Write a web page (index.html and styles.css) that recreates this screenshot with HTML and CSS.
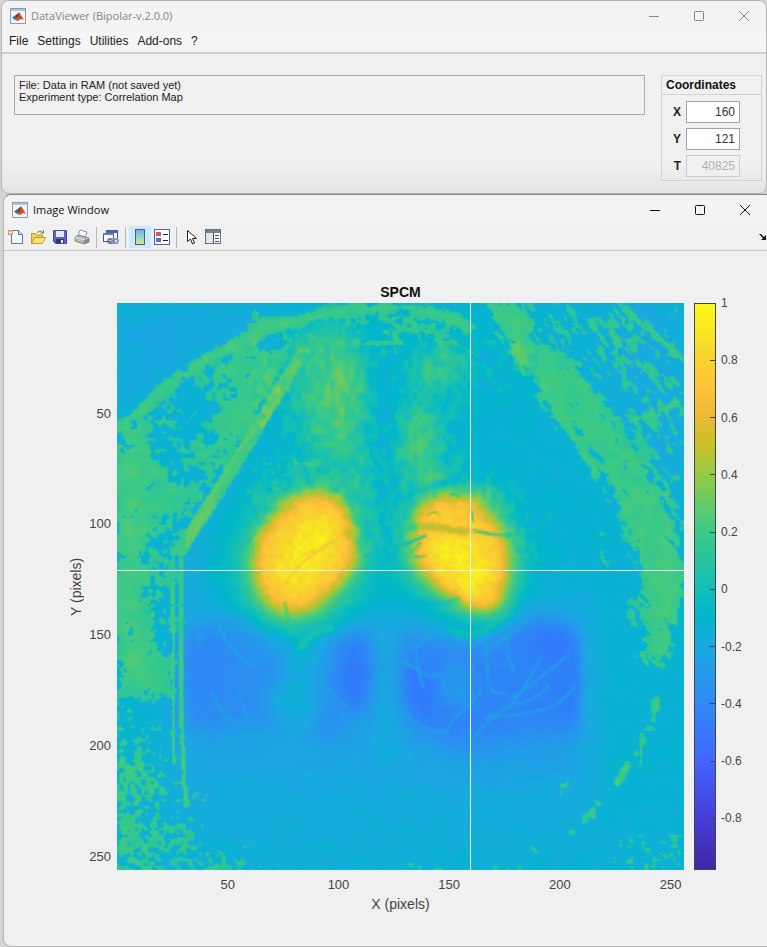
FILE: index.html
```html
<!DOCTYPE html>
<html lang="en">
  <head>
    <meta charset="UTF-8" />
    <meta name="viewport" content="width=device-width, initial-scale=1.0" />
    <title>DataViewer</title>
    <link rel="stylesheet" href="styles.css">
  </head>
  <body>
    <section class="window viewer">
      <header class="titlebar inactive">
        <svg class="app-icon" viewBox="0 0 16 16">
          <rect x=".5" y=".5" width="15" height="15" fill="#f4f7fa" stroke="#8c9bab" />
          <path d="M1 1h14v2H1z" fill="#a9c4dd" />
          <path d="M2 9.500l3-2 3-1.500 1 3-4 3z" fill="#2d6f9e" />
          <path d="M5 12l2-2 2-6 2 3 3 5-3-1-3 2z" fill="#d4501c" />
          <path d="M9 4l-2 6-1-2 1-2z" fill="#7c1f16" />
        </svg>
        <h1>DataViewer (Bipolar-v.2.0.0)</h1>
        <div class="window-buttons">
          <button aria-label="Minimize"><svg viewBox="0 0 12 12"><path d="M1 6.500h10" /></svg></button>
          <button aria-label="Maximize"><svg viewBox="0 0 12 12"><rect x="1.500" y="1.500" width="9" height="9" rx="1" /></svg></button>
          <button aria-label="Close"><svg viewBox="0 0 12 12"><path d="M1 1l10 10M11 1L1 11" /></svg></button>
        </div>
      </header>
      <nav class="menubar">
        <button>File</button>
        <button>Settings</button>
        <button>Utilities</button>
        <button>Add-ons</button>
        <button>?</button>
      </nav>
      <div class="viewer-body">
        <div class="info">
          <p>File: Data in RAM (not saved yet)</p>
          <p>Experiment type: Correlation Map</p>
        </div>
        <fieldset class="coords">
          <legend>Coordinates</legend>
          <div class="coord-row">
            <label for="coordX">X</label>
            <input type="text" id="coordX" value="160" />
          </div>
          <div class="coord-row">
            <label for="coordY">Y</label>
            <input type="text" id="coordY" value="121" />
          </div>
          <div class="coord-row">
            <label for="coordT">T</label>
            <input type="text" id="coordT" value="40825" disabled />
          </div>
        </fieldset>
      </div>
    </section>

    <section class="window image-window">
      <header class="titlebar">
        <svg class="app-icon" viewBox="0 0 16 16">
          <rect x=".5" y=".5" width="15" height="15" fill="#f4f7fa" stroke="#8c9bab" />
          <path d="M1 1h14v2H1z" fill="#a9c4dd" />
          <path d="M2 9.500l3-2 3-1.500 1 3-4 3z" fill="#2d6f9e" />
          <path d="M5 12l2-2 2-6 2 3 3 5-3-1-3 2z" fill="#d4501c" />
          <path d="M9 4l-2 6-1-2 1-2z" fill="#7c1f16" />
        </svg>
        <h2>Image Window</h2>
        <div class="window-buttons">
          <button aria-label="Minimize"><svg viewBox="0 0 12 12"><path d="M1 6.500h10" /></svg></button>
          <button aria-label="Maximize"><svg viewBox="0 0 12 12"><rect x="1.500" y="1.500" width="9" height="9" rx="1" /></svg></button>
          <button aria-label="Close"><svg viewBox="0 0 12 12"><path d="M1 1l10 10M11 1L1 11" /></svg></button>
        </div>
      </header>

      <div class="toolbar">
        <button aria-label="New figure">
          <svg viewBox="0 0 16 16">
            <path d="M3.500 1.500h7l4 4v9h-11z" fill="#f2f8ff" stroke="#5576a8" />
            <path d="M10.500 1.500v4h4" fill="#cfe0f5" stroke="#5576a8" />
            <path d="M0 1h5v5H0z" fill="#e79a78" />
            <path d="M2 2h1v1h1v1H3v1H2V4H1V3h1z" fill="#fff0c8" />
          </svg>
        </button>
        <button aria-label="Open file">
          <svg viewBox="0 0 16 16">
            <path d="M1.500 14V4.500h4l1 1.500h6v3" fill="#f3cf52" stroke="#c79b2c" />
            <path d="M1.500 14.500l3-6h11l-3 6z" fill="#ffe277" stroke="#c79b2c" />
            <path d="M7 3.500q3-3 6 0M13.500 1v3h-3" fill="none" stroke="#7d7a52" />
          </svg>
        </button>
        <button aria-label="Save figure">
          <svg viewBox="0 0 16 16">
            <path d="M1.500 1.500h13v13h-11l-2-2z" fill="#5a62c2" stroke="#4148a4" />
            <path d="M4 2h8v6H4z" fill="#dfe9f8" />
            <path d="M4 10h8v4H4z" fill="#30366f" />
            <path d="M9 11h2v3H9z" fill="#f4f6fa" />
          </svg>
        </button>
        <button aria-label="Print figure">
          <svg viewBox="0 0 16 16">
            <path d="M4 7l2-6 7 2-2 6z" fill="#f8fbff" stroke="#8893a3" />
            <path d="M1 8l4-2 10 3v4l-5 2-9-3z" fill="#b5b7b8" stroke="#85878a" />
            <path d="M1 8l9 3 5-2" fill="none" stroke="#e9e9e9" />
            <path d="M10 11v4l5-2V9z" fill="#85878b" />
            <path d="M2 11l6 2" stroke="#d5b76a" />
          </svg>
        </button>
        <span class="separator"></span>
        <button aria-label="Link plot">
          <svg viewBox="0 0 16 16">
            <rect x="3.500" y="1.500" width="11" height="8" fill="#fff" stroke="#40597f" />
            <path d="M3 1h12v3H3z" fill="#476895" />
            <rect x=".5" y="4.500" width="10" height="8" fill="#f7faff" stroke="#40597f" />
            <path d="M0 4h11v2H0z" fill="#5d7fab" />
            <rect x="5" y="10" width="6" height="4" rx="2" fill="none" stroke="#6b7f9d" stroke-width="2" />
            <rect x="9" y="10" width="6" height="4" rx="2" fill="none" stroke="#8b9ab2" stroke-width="2" />
          </svg>
        </button>
        <span class="separator"></span>
        <button class="active" aria-label="Insert colorbar" aria-pressed="true">
          <svg viewBox="0 0 16 16">
            <defs>
              <linearGradient id="barFill" x2="0" y2="1">
                <stop offset="0" stop-color="#8ba0ea" />
                <stop offset=".5" stop-color="#80dcd0" />
                <stop offset="1" stop-color="#f2dc70" />
              </linearGradient>
            </defs>
            <rect x="3.500" y=".5" width="9" height="15" fill="url(#barFill)" stroke="#4a5f86" />
          </svg>
        </button>
        <button aria-label="Insert legend">
          <svg viewBox="0 0 16 16">
            <rect x=".5" y=".5" width="15" height="15" fill="#fff" stroke="#4a6590" />
            <path d="M2 3h5v4H2z" fill="#e0525e" />
            <path d="M2 9h5v4H2z" fill="#5968d6" />
            <path d="M9 5.500h5M9 11.500h5" stroke="#222" />
          </svg>
        </button>
        <span class="separator"></span>
        <button aria-label="Edit plot">
          <svg viewBox="0 0 16 16">
            <path d="M4.500 1.500v11l3-2.500 2 5 2-1-2-4.500h4z" fill="#fff" stroke="#222" />
          </svg>
        </button>
        <button aria-label="Property inspector">
          <svg viewBox="0 0 16 16">
            <rect x=".5" y=".5" width="15" height="14" fill="#dfe7ec" stroke="#62707b" />
            <path d="M1 1h14v3H1z" fill="#71818e" />
            <path d="M8 4h7v10H8z" fill="#fafafa" />
            <path d="M8.500 4v10M10 6.500h4M10 9.500h4M10 12.500h4" stroke="#4b5055" />
          </svg>
        </button>
        <button class="dock" aria-label="Dock figure">
          <svg viewBox="0 0 8 8"><path d="M0 1h2l3 3 2-2v5H2l2-2z" fill="#111" /></svg>
        </button>
      </div>

      <div class="figure">
        <h3 class="plot-title">SPCM</h3>
        <div class="y-label">Y (pixels)</div>
        <ul class="y-ticks">
          <li>50</li>
          <li>100</li>
          <li>150</li>
          <li>200</li>
          <li>250</li>
        </ul>
        <div class="axes">
          <canvas id="map" width="256" height="256"></canvas>
          <span class="cross-v" id="crossV"></span>
          <span class="cross-h" id="crossH"></span>
        </div>
        <div class="colorbar"></div>
        <ul class="scale">
          <li>1</li>
          <li>0.8</li>
          <li>0.6</li>
          <li>0.4</li>
          <li>0.2</li>
          <li>0</li>
          <li>-0.2</li>
          <li>-0.4</li>
          <li>-0.6</li>
          <li>-0.8</li>
        </ul>
        <ul class="x-ticks">
          <li>50</li>
          <li>100</li>
          <li>150</li>
          <li>200</li>
          <li>250</li>
        </ul>
        <div class="x-label">X (pixels)</div>
      </div>
    </section>

    <script src="map.js"></script>
  </body>
</html>
```
FILE: styles.css
```css
* {
  box-sizing: border-box;
}
body {
  margin: 0;
  min-height: 100vh;
  display: flex;
  flex-direction: column;
  overflow-x: hidden;
  background-color: #d4d4d4;
  color: #222;
  font-family: "Liberation Sans", Arial, sans-serif;
  font-size: 12px;
}
h1,
h2,
h3,
p,
ul {
  margin: 0;
  padding: 0;
}
ul {
  list-style: none;
}
button {
  font: inherit;
  color: inherit;
  background: none;
  border: none;
  padding: 0;
}
.window {
  border: 1px solid #b4b4b4;
  border-radius: 8px;
  background-color: #f0f0f0;
}
.viewer {
  margin-left: 1px;
  background: linear-gradient(#f0f0f0 85%, #e4e4e4);
}
.image-window {
  flex: 1;
  margin-left: 3px;
  border-top-color: #858585;
  border-right: none;
  border-top-right-radius: 0;
  border-bottom-right-radius: 0;
}
.titlebar {
  display: flex;
  align-items: center;
  height: 29px;
  padding-left: 8px;
  border-radius: 8px 8px 0 0;
  background-color: #f3f3f3;
  color: #111;
}
.titlebar h1,
.titlebar h2 {
  flex: 1;
  margin-left: 5px;
  font-family: "Open Sans", "Segoe UI", sans-serif;
  font-size: 11px;
  font-weight: normal;
}
.titlebar.inactive {
  color: #858585;
}
.app-icon {
  width: 16px;
  height: 16px;
}
.window-buttons {
  display: flex;
}
.window-buttons button {
  display: flex;
  align-items: center;
  justify-content: center;
  width: 45px;
  height: 28px;
}
.window-buttons svg {
  width: 12px;
  height: 12px;
  fill: none;
  stroke: currentColor;
}
.menubar {
  display: flex;
  gap: 9px;
  height: 24px;
  padding-left: 7px;
  border-bottom: 2px solid #cfcfcf;
  background-color: #f5f5f5;
}
.viewer-body {
  display: flex;
  align-items: flex-start;
  gap: 16px;
  padding: 21px 4px 12px 12px;
}
.info {
  flex: 1;
  min-height: 40px;
  padding: 3px 4px;
  border: 1px solid #a9a9a9;
  font-size: 11px;
  line-height: 12px;
}
.coords {
  width: 101px;
  margin: 0;
  padding: 0 0 3px;
  border: 1px solid #d3d3d3;
}
.coords legend {
  float: left;
  width: 100%;
  height: 19px;
  margin-bottom: 6px;
  padding: 0 4px;
  border-bottom: 1px solid #d3d3d3;
  font-weight: bold;
  line-height: 19px;
  color: #111;
}
.coord-row {
  clear: both;
  display: flex;
  align-items: center;
  justify-content: flex-end;
  gap: 5px;
  margin-bottom: 5px;
  padding-right: 21px;
}
.coord-row:last-child {
  margin-bottom: 0;
}
.coord-row label {
  font-weight: bold;
}
.coord-row input {
  width: 54px;
  height: 22px;
  padding: 0 4px;
  border: 1px solid #a3a3a3;
  background-color: #fff;
  color: #333;
  font: inherit;
  text-align: right;
}
.coord-row input:disabled {
  border-color: #cdcdcd;
  background-color: #f0f0f0;
  color: #b0b0b0;
}
.toolbar {
  display: flex;
  align-items: center;
  height: 27px;
  padding-left: 1px;
  border-bottom: 1px solid #c9c9c9;
}
.toolbar button {
  display: flex;
  align-items: center;
  justify-content: center;
  width: 22px;
  height: 22px;
}
.toolbar svg {
  width: 16px;
  height: 16px;
}
.toolbar .active {
  background-color: #cce8ff;
}
.separator {
  width: 1px;
  height: 21px;
  margin: 0 3px;
  background-color: #b5b5b5;
}
.toolbar .dock {
  width: 9px;
  margin-left: auto;
}
.toolbar .dock svg {
  width: 8px;
  height: 8px;
}
.figure {
  display: grid;
  grid-template-columns: 16px 33px minmax(0, 1fr) 10px 22px 40px;
  grid-template-areas:
    ". . title . . ."
    "ylabel yticks axes . bar scale"
    ". . xticks . . ."
    ". . xlabel . . .";
  padding: 33px 11px 33px 64px;
  color: #444;
  font-size: 13px;
}
.plot-title {
  grid-area: title;
  height: 19px;
  color: #111;
  font-size: 14px;
  line-height: 16px;
  text-align: center;
}
.y-label,
.x-label {
  font-size: 14px;
  line-height: 16px;
  text-align: center;
}
.y-label {
  grid-area: ylabel;
  writing-mode: vertical-rl;
  transform: rotate(180deg);
}
.x-label {
  grid-area: xlabel;
}
.y-ticks {
  grid-area: yticks;
  display: grid;
  grid-template-rows: repeat(5, minmax(0, 50fr)) minmax(0, 6fr);
  padding-right: 6px;
  text-align: right;
}
.y-ticks li {
  align-self: end;
  line-height: 16px;
  transform: translateY(50%);
}
.x-ticks {
  grid-area: xticks;
  display: grid;
  grid-template-columns: repeat(5, minmax(0, 50fr)) minmax(0, 6fr);
  padding: 7px 0 3px;
}
.x-ticks li {
  justify-self: end;
  line-height: 16px;
  transform: translateX(50%);
}
.axes {
  grid-area: axes;
  position: relative;
  aspect-ratio: 1;
}
.axes canvas {
  display: block;
  width: 100%;
  height: 100%;
}
.cross-v,
.cross-h {
  position: absolute;
  background-color: #e6f5f2;
}
.cross-v {
  top: 0;
  bottom: 0;
  width: 1px;
}
.cross-h {
  left: 0;
  right: 0;
  height: 1px;
}
.colorbar {
  grid-area: bar;
  border: 1px solid #444;
  background: linear-gradient(
    to top,
    #3e26a8,
    #4640dd 10%,
    #4269fe 20%,
    #2d8cf3 30%,
    #19abe0 40%,
    #00b7ca 45%,
    #14bfb7 50%,
    #3dca85 60%,
    #96ca45 70%,
    #c9c128 75%,
    #e9ba36 80%,
    #fec338 85%,
    #f7d92b 92%,
    #f9fb15
  );
}
.scale {
  grid-area: scale;
  display: grid;
  grid-template-rows: repeat(9, minmax(0, 20fr)) minmax(0, 18fr);
  margin-left: -6px;
  font-size: 12px;
}
.scale li {
  display: flex;
  align-items: center;
  gap: 5px;
  height: 14px;
  transform: translateY(-50%);
}
.scale li::before {
  content: "";
  width: 6px;
  height: 1px;
  background-color: #444;
}
```
FILE: map.js
```javascript
const SIZE = 256;
const UNITS = 568; // drawing units across the map

const colors = [
  [0, 62, 38, 168], [0.1, 70, 64, 221], [0.2, 66, 105, 254],
  [0.25, 47, 126, 250], [0.3, 45, 140, 243], [0.4, 25, 171, 224],
  [0.45, 0, 183, 202], [0.5, 20, 191, 183], [0.6, 61, 202, 133],
  [0.7, 150, 202, 69], [0.75, 201, 193, 40], [0.8, 233, 186, 54],
  [0.85, 254, 195, 56], [0.92, 247, 217, 43], [1, 249, 251, 21],
];

function parula(v) {
  const p = Math.min(1, Math.max(0, (v + 1) / 2));
  let i = 1;
  while (colors[i][0] < p) i++;
  const a = colors[i - 1];
  const b = colors[i];
  const t = (p - a[0]) / (b[0] - a[0]);
  return [1, 2, 3].map((k) => a[k] + (b[k] - a[k]) * t);
}

function hash(x, y) {
  let h = Math.imul(x, 374761393) + Math.imul(y, 668265263);
  h = Math.imul(h ^ (h >>> 13), 1274126177);
  return ((h ^ (h >>> 16)) >>> 0) / 4294967296;
}

function noise(x, y) {
  const xi = Math.floor(x);
  const yi = Math.floor(y);
  const fx = x - xi;
  const fy = y - yi;
  const top = hash(xi, yi) * (1 - fx) + hash(xi + 1, yi) * fx;
  const bottom = hash(xi, yi + 1) * (1 - fx) + hash(xi + 1, yi + 1) * fx;
  return top * (1 - fy) + bottom * fy;
}

function makeLayer(start) {
  const canvas = document.createElement("canvas");
  canvas.width = canvas.height = SIZE;
  const ctx = canvas.getContext("2d", { willReadFrequently: true });
  ctx.scale(SIZE / UNITS, SIZE / UNITS);
  ctx.lineCap = "round";
  ctx.lineJoin = "round";

  function setup(value, blur, alpha) {
    const g = Math.round(((value + 1) / 2) * 255);
    ctx.fillStyle = ctx.strokeStyle = `rgb(${g}, ${g}, ${g})`;
    ctx.filter = blur ? `blur(${blur}px)` : "none";
    ctx.globalAlpha = alpha;
  }

  function trace(pts) {
    ctx.beginPath();
    for (let i = 0; i < pts.length; i += 2) ctx.lineTo(pts[i], pts[i + 1]);
  }

  setup(start, 0, 1);
  ctx.fillRect(0, 0, UNITS, UNITS);

  return {
    area(value, blur, pts, alpha = 1) {
      setup(value, blur, alpha);
      trace(pts);
      ctx.closePath();
      ctx.fill();
    },
    line(value, width, blur, pts, alpha = 1) {
      setup(value, blur, alpha);
      ctx.lineWidth = width;
      ctx.beginPath();
      ctx.moveTo(pts[0], pts[1]);
      for (let i = 2; i < pts.length - 2; i += 2) {
        ctx.quadraticCurveTo(pts[i], pts[i + 1], (pts[i] + pts[i + 2]) / 2, (pts[i + 1] + pts[i + 3]) / 2);
      }
      ctx.lineTo(pts[pts.length - 2], pts[pts.length - 1]);
      ctx.stroke();
    },
    oval(value, blur, x, y, rx, ry, angle = 0, alpha = 1) {
      setup(value, blur, alpha);
      ctx.beginPath();
      ctx.ellipse(x, y, rx, ry, angle, 0, Math.PI * 2);
      ctx.fill();
    },
    data: () => ctx.getImageData(0, 0, SIZE, SIZE).data,
  };
}

// Smooth correlation values
function drawBase() {
  const m = makeLayer(-0.14);
  m.area(-0.2, 8, [0, 0, 180, 0, 90, 55, 0, 120]);
  m.area(-0.21, 10, [480, 0, 568, 0, 568, 230, 540, 200]);
  m.area(-0.07, 10, [190, 25, 380, 30, 400, 90, 420, 280, 380, 320, 130, 320, 110, 280, 160, 130]);
  m.area(-0.14, 9, [335, 90, 400, 80, 490, 200, 520, 330, 400, 310, 395, 210, 330, 160]);
  m.area(-0.12, 4, [172, 80, 190, 80, 175, 160, 120, 240, 110, 320, 68, 320, 68, 250, 110, 170]);
  m.area(-0.21, 4, [150, 125, 120, 190, 95, 230, 82, 330, 68, 330, 68, 250, 110, 175]);
  m.oval(0.19, 7, 213, 88, 34, 66);
  m.oval(0.26, 5, 222, 90, 14, 56);
  m.oval(0.14, 6, 192, 58, 22, 24);
  m.oval(0.22, 6, 303, 145, 20, 50);
  m.oval(0.13, 4, 322, 66, 28, 22);
  m.oval(0.16, 7, 230, 170, 40, 25, 0, 0.7);
  m.oval(0.06, 7, 160, 190, 18, 28, 0.6);
  m.line(-0.13, 14, 3, [268, 45, 267, 150, 270, 290]);
  m.line(-0.17, 5, 1, [268, 60, 267, 120]);

  // lower lobes
  m.area(-0.24, 8, [68, 312, 240, 305, 310, 300, 470, 300, 475, 470, 380, 480, 60, 480]);
  m.area(-0.2, 12, [68, 470, 480, 470, 480, 520, 68, 520]);
  m.area(-0.38, 5, [68, 334, 110, 320, 160, 325, 174, 355, 158, 385, 158, 420, 68, 428]);
  m.area(-0.43, 6, [70, 340, 110, 322, 118, 340, 105, 380, 110, 420, 74, 410]);
  m.oval(-0.14, 5, 180, 397, 22, 24);
  m.oval(-0.1, 5, 190, 350, 14, 27);
  m.oval(-0.3, 6, 227, 370, 28, 50);
  m.oval(-0.54, 4, 238, 367, 19, 42);
  m.oval(-0.44, 4, 215, 421, 9, 18);
  m.area(-0.32, 10, [290, 420, 464, 410, 464, 455, 370, 467]);
  m.area(-0.44, 4, [283, 345, 298, 325, 326, 335, 354, 340, 390, 322, 420, 315, 450, 325, 467, 340, 466, 425, 400, 435, 348, 444, 320, 434, 290, 415, 283, 395]);
  m.oval(-0.53, 5, 304, 394, 14, 28, -0.4);
  m.oval(-0.52, 5, 438, 342, 32, 15, 0.45);
  m.oval(-0.5, 5, 450, 385, 15, 38);
  m.oval(-0.26, 4, 340, 383, 12, 25);
  m.area(-0.19, 2, [467, 300, 478, 300, 478, 490, 467, 490]);
  m.line(-0.27, 2, 1, [472, 320, 472, 440]);
  m.area(-0.14, 8, [484, 300, 568, 280, 568, 568, 484, 568]);
  m.area(-0.15, 10, [0, 515, 568, 515, 568, 568, 0, 568]);
  m.line(-0.2, 18, 9, [60, 510, 300, 525, 460, 515]);
  m.line(-0.13, 14, 5, [265, 270, 255, 300, 230, 315]);
  m.line(-0.15, 14, 4, [268, 330, 272, 470]);

  // vessels
  const veins = [
    [354, 440, 368, 420, 392, 405, 402, 395, 425, 355],
    [392, 405, 418, 397, 432, 384],
    [397, 395, 425, 375, 452, 353],
    [370, 415, 430, 412, 458, 386],
    [369, 340, 370, 360, 372, 380, 376, 391, 389, 391],
    [369, 350, 390, 335, 410, 318],
    [390, 332, 390, 350, 397, 369],
    [286, 360, 300, 365, 312, 375, 325, 370, 329, 390],
    [300, 353, 302, 370, 307, 385],
    [295, 350, 310, 335, 328, 324],
    [328, 430, 338, 415, 355, 402, 365, 387],
    [203, 377, 216, 390, 228, 405],
    [100, 323, 120, 355, 140, 365],
    [120, 390, 130, 410, 130, 424],
    [82, 310, 82, 345], [103, 320, 108, 335],
    [95, 390, 105, 417, 130, 424],
    [355, 345, 378, 329, 395, 320],
    [285, 410, 305, 425, 330, 432],
  ];
  veins.forEach((v) => m.line(-0.2, 3, 0, v, 0.6));

  // activation on the left side
  m.oval(0.05, 12, 184, 254, 66, 76, 0.3);
  m.area(0.2, 6, [190, 184, 232, 193, 246, 243, 235, 287, 207, 318, 164, 325, 133, 300, 127, 250, 152, 208]);
  m.area(0.5, 4, [188, 189, 222, 196, 241, 232, 240, 262, 215, 292, 186, 311, 157, 311, 137, 278, 137, 240, 160, 208]);
  m.area(0.72, 3, [193, 193, 221, 200, 234, 235, 236, 259, 209, 287, 182, 305, 155, 296, 142, 268, 144, 238, 167, 209]);
  m.area(0.96, 7, [197, 205, 218, 214, 219, 242, 205, 268, 182, 298, 161, 286, 158, 262, 177, 230]);
  m.line(0.62, 2, 0, [163, 287, 182, 263, 195, 252, 214, 240, 231, 229]);
  m.line(0.65, 1, 0, [178, 259, 194, 247, 200, 250]);
  m.line(0.1, 2, 1, [228, 228, 238, 236, 245, 242]);

  // activation on the right side
  m.oval(0.03, 12, 345, 252, 60, 68);
  m.area(0.2, 6, [297, 203, 330, 184, 368, 188, 399, 225, 400, 270, 386, 314, 352, 315, 302, 278, 289, 245]);
  m.area(0.5, 4, [303, 202, 328, 189, 362, 190, 382, 215, 391, 238, 396, 264, 385, 308, 361, 306, 320, 285, 301, 268, 291, 238]);
  m.area(0.72, 2, [305, 205, 322, 198, 353, 198, 374, 222, 388, 245, 386, 274, 377, 304, 356, 300, 320, 275, 304, 255, 302, 225]);
  m.oval(0.98, 7, 338, 250, 27, 24);
  m.oval(0.95, 6, 357, 274, 18, 24);
  m.line(0.05, 3, 1, [290, 225, 315, 223, 337, 228, 353, 229]);
  m.line(0, 3, 0, [358, 228, 375, 233, 403, 232, 425, 223, 437, 210], 0.7);
  m.line(0.05, 3, 0, [288, 242, 300, 237, 309, 233]);
  m.line(0.1, 2, 0, [296, 249, 304, 240]);
  m.line(0.1, 2, 0, [298, 255, 309, 253]);
  m.line(0.1, 2, 0, [333, 191, 342, 193]);
  m.line(0.2, 2, 0, [355, 208, 357, 219]);
  m.line(0.3, 2, 0, [311, 212, 318, 208, 322, 211]);
  m.line(0.4, 9, 2, [312, 177, 321, 174]);
  m.line(-0.12, 4, 1, [286, 198, 310, 182, 350, 177, 371, 163]);

  // small vessels around the active areas
  m.line(0.2, 3, 1, [181, 346, 195, 331, 217, 325]);
  m.line(0.15, 2, 0, [204, 316, 213, 303, 235, 299]);
  m.line(0.15, 2, 0, [168, 300, 172, 324, 184, 334]);
  m.line(0.2, 3, 1, [333, 328, 350, 335, 370, 329, 383, 315, 394, 309]);
  m.line(0.1, 2, 0, [387, 315, 398, 292, 407, 278]);
  m.line(-0.1, 3, 1, [301, 300, 326, 304, 343, 296]);
  m.line(0.03, 2, 0, [108, 248, 130, 240, 140, 229]);
  for (let i = 0; i < 22; i++) {
    m.oval(0.02, 0, 400 + i * 2.6, 135 + i * 4.6, 1, 1);
    m.oval(0.02, 0, 408 + i * 2.4, 138 + i * 4.4, 1, 1);
  }
  return m.data();
}

// How much of each region is covered by green speckles
function drawCoverage() {
  const m = makeLayer(-1);
  m.area(0.3, 4, [0, 130, 30, 110, 75, 85, 70, 180, 62, 250, 52, 390, 35, 395, 30, 440, 45, 568, 0, 568]);
  m.area(1, 5, [0, 140, 32, 125, 36, 210, 28, 260, 32, 310, 45, 350, 50, 390, 10, 400, 0, 380]);
  m.area(0.15, 3, [75, 70, 130, 40, 190, 28, 175, 55, 115, 155, 60, 245, 35, 230, 50, 110]);
  m.area(0.9, 4, [125, 75, 180, 42, 145, 105, 110, 150, 95, 120]);
  m.area(-0.7, 4, [65, 100, 90, 80, 97, 115, 72, 140, 55, 170, 37, 140]);
  m.area(-0.35, 4, [36, 220, 54, 230, 53, 360, 42, 345, 40, 315, 30, 310]);
  m.area(-0.5, 5, [5, 388, 45, 390, 60, 470, 20, 463, 10, 420]);
  m.area(0.5, 6, [0, 420, 12, 440, 30, 470, 42, 568, 0, 568]);
  m.area(0.05, 8, [30, 470, 55, 490, 85, 545, 110, 568, 30, 568]);
  m.line(1, 11, 1, [0, 128, 35, 98, 60, 75, 120, 38, 190, 11, 290, 3, 340, 18, 354, 25]);
  m.oval(0.6, 3, 146, 18, 16, 12);
  m.line(-0.7, 7, 1, [200, 28, 245, 15, 290, 12]);
  m.line(1, 13, 0, [195, 38, 172, 72, 110, 175, 78, 225, 63, 248]);
  m.line(-0.6, 2, 0, [192, 28, 170, 56, 140, 110]);
  m.line(1, 3, 0, [56, 245, 56, 400, 57, 460]);
  m.line(1, 4, 0, [64, 240, 63, 400, 69, 505]);
  m.area(-0.05, 5, [190, 22, 290, 12, 360, 25, 345, 46, 195, 40]);
  m.line(0.7, 2, 0, [195, 40, 290, 40]);
  m.area(-0.2, 8, [185, 140, 265, 130, 258, 190, 180, 185, 150, 205, 130, 230, 118, 230, 155, 160]);

  // outer rim, right side
  m.area(-0.2, 4, [365, 0, 568, 0, 568, 220, 540, 230, 450, 120, 390, 60]);
  m.area(-0.8, 5, [510, 0, 568, 0, 568, 40, 545, 28]);
  m.area(-0.6, 5, [470, 60, 500, 60, 515, 120, 535, 140, 522, 165, 490, 110]);
  m.area(1, 3, [372, 0, 412, 0, 416, 45, 470, 75, 498, 120, 515, 155, 527, 172, 553, 205, 566, 245, 568, 285, 554, 340, 543, 362, 534, 380, 526, 345, 523, 275, 509, 230, 498, 195, 481, 165, 466, 150, 438, 115, 420, 80, 402, 60]);
  m.area(-0.75, 4, [422, 90, 440, 95, 475, 145, 505, 195, 510, 240, 485, 190, 455, 145]);
  m.line(0.9, 7, 1, [426, 80, 443, 115, 470, 150, 480, 172]);
  m.line(0.9, 5, 1, [482, 130, 492, 155, 503, 190, 515, 220]);
  m.line(0.8, 6, 1, [519, 118, 545, 108, 563, 98]);
  m.line(0.8, 5, 1, [502, 5, 530, 20, 568, 58]);
  m.line(0.7, 4, 1, [480, 15, 520, 55, 568, 85]);
  m.line(0.7, 5, 2, [529, 130, 530, 160]);
  m.line(-0.05, 8, 2, [482, 205, 484, 240, 492, 265]);
  m.line(0.7, 5, 1, [515, 300, 517, 322]);
  m.line(0.5, 5, 1, [541, 396, 537, 418, 524, 445, 507, 473, 492, 491, 474, 512, 451, 535]);
  m.line(0.9, 7, 0, [508, 467, 501, 480]);
  m.oval(0.9, 0, 476, 511, 3, 5);
  m.oval(0.8, 0, 541, 401, 3, 8);
  m.line(0.5, 2, 0, [525, 430, 525, 463]);
  m.line(0.5, 4, 1, [442, 490, 450, 481]);
  m.line(0.5, 4, 1, [413, 547, 423, 550]);
  m.line(0.6, 2, 0, [334, 38, 360, 52]);
  m.area(0, 6, [490, 568, 510, 545, 545, 540, 568, 520, 568, 568]);

  // bottom edge
  m.area(0.6, 2, [65, 568, 90, 557, 120, 560, 180, 568]);
  m.line(0.1, 6, 2, [50, 528, 80, 540]);
  m.oval(0.7, 1, 83, 494, 8, 3);
  m.line(0.3, 3, 1, [128, 543, 140, 541]);
  m.line(0.5, 4, 1, [288, 565, 325, 568]);
  m.line(0.4, 4, 1, [370, 567, 410, 567]);
  return m.data();
}

function drawMap() {
  const base = drawBase();
  const coverage = drawCoverage();
  const ctx = document.getElementById("map").getContext("2d");
  const image = ctx.createImageData(SIZE, SIZE);

  for (let y = 0; y < SIZE; y++) {
    for (let x = 0; x < SIZE; x++) {
      const i = (y * SIZE + x) * 4;
      let v = (base[i] / 255) * 2 - 1;

      // the grain follows the rim on the right side
      const along = x * 0.58 + y * 0.81;
      const across = x * 0.81 - y * 0.58;
      const right = x > 155 && y < 190;
      const low = y > 190;
      const coarse = right ? noise(along / 6, across / 1.7) : noise(x / 6, y / 6);
      const fine = right ? noise(along / 2.5 + 40, across / 1.2) : noise(x / 1.6 + 70, y / 1.6 + 30);
      const mix = low ? 0.2 : 0.5;
      const grain = 0.5 + ((coarse - 0.5) * mix + (fine - 0.5) * (1 - mix)) * 1.4;
      const cover = coverage[i] / 255;
      if (cover > 0.08 && grain < cover) {
        v = Math.max(v, 0.1 + cover * 0.1 + (noise(x / 4, y / 4) - 0.5) * 0.08);
        if (x < 89 && x > 30 && y > 16 && y < 112 && cover > 0.99) v = 0.28;
      }

      // mottled tissue between the two active areas
      if (x > 60 && x < 190 && y > 15 && y < 115 && v > -0.12 && v < 0.4) {
        v += (noise(x / 2.2, y / 3) - 0.5) * 0.22;
      }
      if (v > 0.45) v += (noise(x / 2, y / 2) - 0.5) * 0.12;
      v += (noise(x / 6, y / 3) - 0.5) * 0.045 + (hash(x, y) - 0.5) * 0.03;

      const c = parula(v);
      image.data[i] = c[0];
      image.data[i + 1] = c[1];
      image.data[i + 2] = c[2];
      image.data[i + 3] = 255;
    }
  }
  ctx.putImageData(image, 0, 0);
}

const coordX = document.getElementById("coordX");
const coordY = document.getElementById("coordY");

function moveCross() {
  document.getElementById("crossV").style.left = `${((coordX.value - 0.5) / SIZE) * 100}%`;
  document.getElementById("crossH").style.top = `${((coordY.value - 0.5) / SIZE) * 100}%`;
}

coordX.addEventListener("input", moveCross);
coordY.addEventListener("input", moveCross);

drawMap();
moveCross();
```
